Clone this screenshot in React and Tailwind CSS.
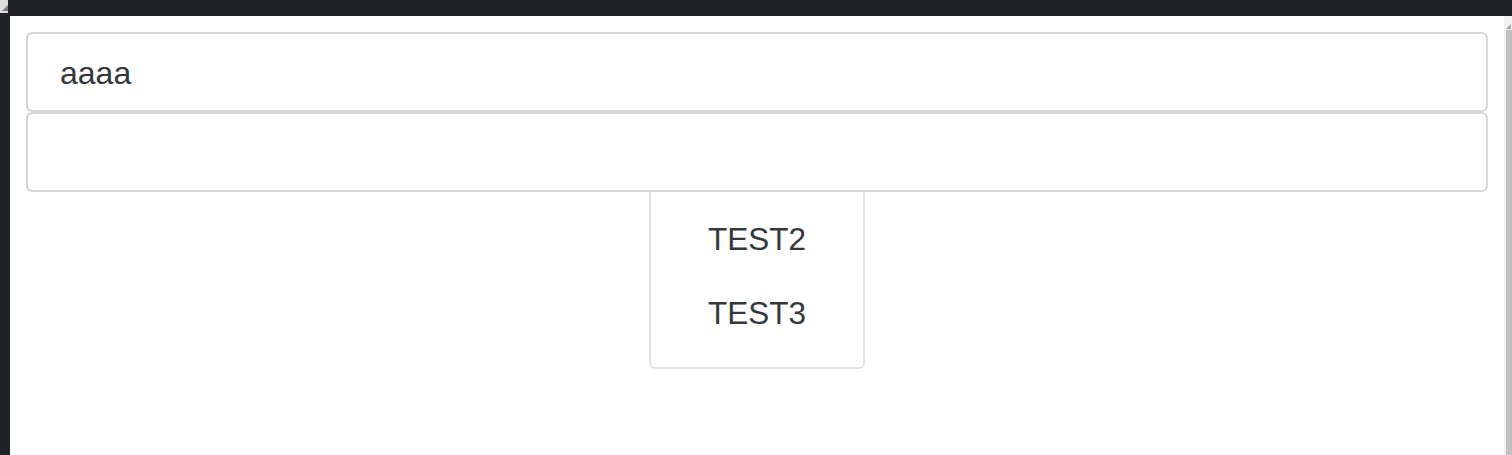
import React from "react";

export default function App() {
  return (
    <div className="w-[1512px] h-[455px] bg-[#1f2227] flex flex-col overflow-hidden" style={{ fontFamily: '"Liberation Sans", Arial, sans-serif' }}>
      <div className="h-4 flex shrink-0">
        <div className="w-2 h-[13px] bg-[#dcdcdc] relative">
          <svg className="absolute right-0 bottom-[2px]" width="6" height="6" viewBox="0 0 6 6">
            <path d="M6 0 L6 6 L0 6 Z" fill="#7a7a7a" />
          </svg>
        </div>
      </div>
      <div className="flex flex-1 min-h-0">
        <div className="w-[10px] shrink-0" />
        <div className="flex-1 bg-white p-4">
          <div className="h-20 border-2 border-[#d6d6db] rounded-md bg-white flex items-center px-8 pt-[2px] text-[32px] text-[#34373b]">
            aaaa
          </div>
          <div className="relative">
            <div className="h-20 border-2 border-[#d6d6db] rounded-md bg-white" />
            <div className="absolute top-full left-1/2 -translate-x-1/2 w-[216px] bg-white border-2 border-t-0 border-[#e4e4e4] rounded-b-md pt-[10px] pb-[17px]">
              <div className="py-5 leading-[34px] text-[31.5px] text-center text-[#34373b]">TEST2</div>
              <div className="py-5 leading-[34px] text-[31.5px] text-center text-[#34373b]">TEST3</div>
            </div>
          </div>
        </div>
        <div className="w-2 shrink-0 bg-[#f1f1f1] flex flex-col">
          <div className="h-[14px] flex items-end justify-end pr-[1px] pb-[1px]">
            <svg width="5" height="5" viewBox="0 0 5 5">
              <path d="M5 0 L5 5 L0 5 Z" fill="#a3a3a3" />
            </svg>
          </div>
          <div className="flex-1 ml-[2px] bg-[#c1c1c1]" />
        </div>
      </div>
    </div>
  );
}
